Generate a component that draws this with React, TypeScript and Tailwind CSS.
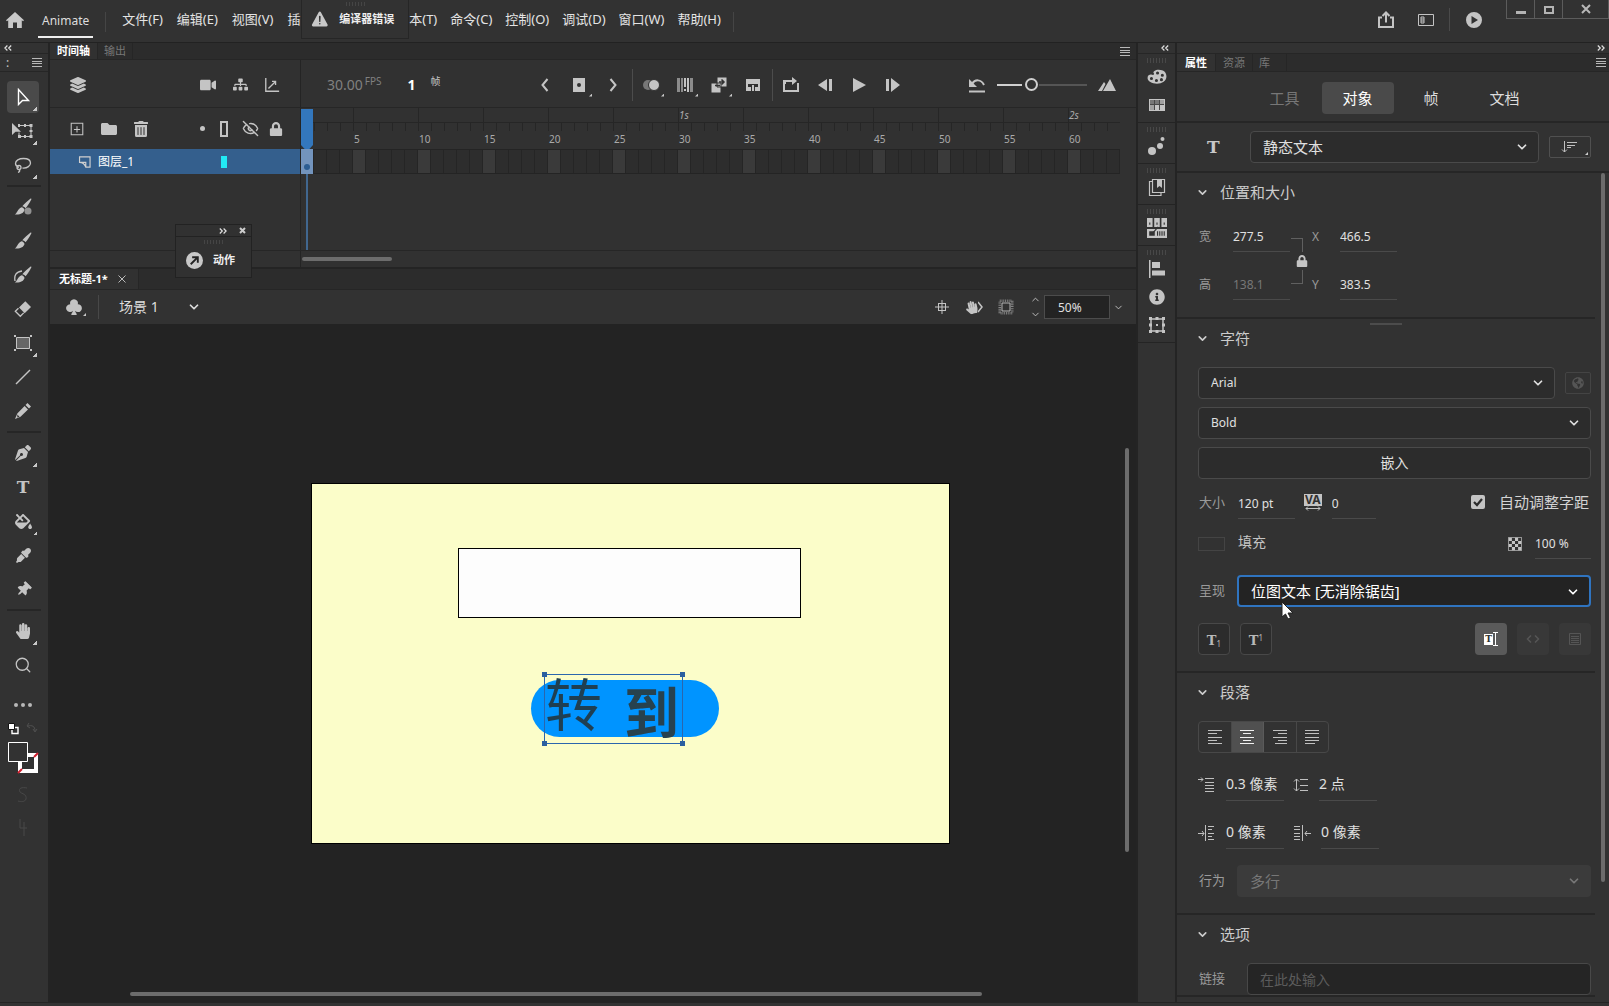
import { useState } from "react";
import type { ReactNode } from "react";
import clsx from "clsx";
import { EyeOff, Search, ChevronDown, ChevronUp } from "lucide-react";
import {
  FaEyeDropper,
  FaFillDrip,
  FaFolder,
  FaGlobeAmericas,
  FaHandPaper,
  FaInfoCircle,
  FaLayerGroup,
  FaLock,
  FaPenNib,
  FaSitemap,
  FaThumbtack,
  FaTrashAlt,
  FaVideo,
} from "react-icons/fa";
import { BsSuitClubFill } from "react-icons/bs";
import { IoWarning } from "react-icons/io5";

const frames = Array.from({ length: 63 }, (_, i) => i + 1);

type IconProps = { children: ReactNode; size?: number; className?: string };

function Icon({ children, size = 18, className }: IconProps) {
  return (
    <svg
      width={size}
      height={size}
      viewBox="0 0 18 18"
      fill="currentColor"
      className={className}
      aria-hidden="true"
    >
      {children}
    </svg>
  );
}

function Corner() {
  return (
    <span className="absolute right-[2px] bottom-[2px] h-1 w-1 bg-linear-to-tl from-[#c8c8c8] from-50% to-transparent to-50%" />
  );
}

function Hamburger() {
  return (
    <svg width="10" height="9" viewBox="0 0 10 9" fill="none" stroke="#b8b8b8" aria-hidden="true">
      <path d="M0 .5h10M0 3.5h10M0 5.5h10M0 8.5h10" />
    </svg>
  );
}

function Chevrons({ right = false }: { right?: boolean }) {
  return (
    <svg width="8" height="6" viewBox="0 0 8 6" fill="none" stroke="#e0e0e0" strokeWidth="1.2" aria-hidden="true">
      <path d={right ? "M.8.5 3.3 3 .8 5.5M4.6.5 7.1 3 4.6 5.5" : "M3.4.5.9 3l2.5 2.5M7.2.5 4.7 3l2.5 2.5"} />
    </svg>
  );
}

function SlabT({ className }: { className?: string }) {
  return <span className={clsx("font-['DejaVu_Serif',serif] leading-none", className)}>T</span>;
}

function Header() {
  const menus = ["文件(F)", "编辑(E)", "视图(V)", "插"];
  const moreMenus = ["本(T)", "命令(C)", "控制(O)", "调试(D)", "窗口(W)", "帮助(H)"];

  return (
    <header className="flex h-[43px] shrink-0 border-b border-[#222] bg-[#323232]">
      <a href="#home" aria-label="主页" className="flex h-10 w-[38px] items-center pl-[6px] text-[#c8c8c8]">
        <Icon>
          <path d="M9 1 18 9.2l-1 1-1.2-1V17H11v-5.5H7V17H2.2V9.2L1 10.2l-1-1z" />
        </Icon>
      </a>
      <a href="#animate" className="h-[38px] border-b-2 border-[#eee] px-1 pt-3 text-xs leading-[18px] text-[#ddd]">
        Animate
      </a>
      <div className="mt-3 ml-3 h-5 border-l border-[#454545]" />
      <nav className="flex w-[195px] gap-[14px] overflow-hidden pt-[9px] pl-4 text-[13px] leading-5 whitespace-nowrap text-[#e4e4e4]">
        {menus.map((m) => (
          <a key={m} href="#menu">{m}</a>
        ))}
      </nav>

      {/* floating compiler error panel */}
      <button className="relative flex h-[39px] w-[108px] items-center border border-t-0 border-[#262626] bg-[#323232] pl-2 text-[11px] font-bold text-[#eee]">
        <span className="absolute top-[2px] left-11 h-1 w-5 bg-[repeating-linear-gradient(90deg,#454545_0_1px,transparent_1px_3px)]" />
        <IoWarning size={20} className="mr-[9px] text-[#c8c8c8]" />
        编译器错误
      </button>

      <nav className="flex gap-[13px] pt-[9px] text-[13px] leading-5 whitespace-nowrap text-[#e4e4e4]">
        {moreMenus.map((m) => (
          <a key={m} href="#menu">{m}</a>
        ))}
      </nav>
      <div className="mt-3 ml-3 h-5 border-l border-[#454545]" />

      <div className="ml-auto flex text-[#c4c4c4]">
        <button aria-label="共享" className="flex h-10 w-10 items-center justify-center">
          <Icon>
            <path d="M5 6.5H2V16h14V6.5h-3M9 11.5V2M5.5 5 9 1.5 12.500 5" fill="none" stroke="currentColor" strokeWidth="2" />
          </Icon>
        </button>
        <button aria-label="工作区" className="flex h-10 w-10 items-center justify-center">
          <Icon>
            <path d="M1.500 3.500h15v11h-15zM4 6h3v6H4zM4 8h3M4 10h3" fill="none" stroke="currentColor" />
          </Icon>
        </button>
        <div className="mt-2 mr-1 ml-[3px] h-[23px] border-l border-[#4a4a4a]" />
        <button aria-label="测试影片" className="flex h-10 w-10 items-center justify-center">
          <Icon>
            <path d="M9 1a8 8 0 1 0 0 16A8 8 0 0 0 9 1zM6.500 5 13 9l-6.500 4z" fillRule="evenodd" />
          </Icon>
        </button>
        <div className="ml-3 flex h-[19px] w-[103px] divide-x divide-[#5c5c5c] border border-t-0 border-[#5c5c5c]">
          <button aria-label="最小化" className="flex w-7 items-end justify-center pb-1">
            <span className="h-[3px] w-[10px] bg-[#b4b4b4]" />
          </button>
          <button aria-label="最大化" className="flex w-7 items-end justify-center pb-1">
            <span className="h-2 w-[10px] border-2 border-[#b4b4b4]" />
          </button>
          <button aria-label="关闭" className="flex flex-1 items-center justify-center">
            <svg width="10" height="10" viewBox="0 0 10 10" stroke="#b8b8b8" strokeWidth="2">
              <path d="m1 1 8 8M9 1 1 9" />
            </svg>
          </button>
        </div>
      </div>
    </header>
  );
}

const handle = <path d="M11.500 10.300C13 8.600 15.700 4.800 17.400 1.200c.2-.6-.3-1-.8-.6C13.500 3 10 6.500 8.300 8.300c1.500.3 2.600 1 3.200 2z" />;
const bristle = <path d="M7.500 9.200c1.500.2 2.800 1.300 3 2.800-.8 3-4 5-9.700 4.500C3 15.500 3.500 11 7.500 9.200z" />;

const toolGroups: { name: string; icon: ReactNode; more?: boolean }[][] = [
  [
    {
      name: "选择工具",
      more: true,
      icon: <Icon><path d="M4.500 1.500v15l4-4h6z" fill="none" stroke="#fff" strokeWidth="1.400" /></Icon>,
    },
    {
      name: "任意变形工具",
      more: true,
      icon: (
        <svg width="22" height="18" viewBox="0 0 22 18" fill="currentColor">
          <path d="M0 1v12l3.500-3.300H9z" />
          <path d="M7 3.500h12v11H7v-4" fill="none" stroke="currentColor" />
          <path d="M12 2h2v3h-2zM17.500 2h3v3h-3zM17.500 8h3v2h-3zM17.500 13h3v3h-3zM12 13h2v3h-2zM6 13h3v3H6zM6 2h2v3H6z" />
        </svg>
      ),
    },
    {
      name: "套索工具",
      more: true,
      icon: (
        <Icon>
          <path
            d="M5 11.500C2.500 10.500 1.500 9 1.500 7.500c0-3 3.500-5 8-5s7 2 7 4.500-3 5.500-8 5M5 9.500a2 2 0 1 0 0 4 2 2 0 0 0 0-4zM5.500 13.500c.5 1.500 0 2.500-1.500 3"
            fill="none"
            stroke="currentColor"
            strokeWidth="1.300"
          />
        </Icon>
      ),
    },
  ],
  [
    { name: "流畅画笔", icon: <Icon>{handle}{bristle}<circle cx="14" cy="13" r="3.500" fill="#929292" /></Icon> },
    { name: "传统画笔", icon: <Icon>{handle}{bristle}</Icon> },
    {
      name: "画笔工具",
      icon: <Icon>{handle}{bristle}<path d="M1 15c-1-6 1-9 7-10" fill="none" stroke="currentColor" strokeWidth="1.300" /></Icon>,
    },
    {
      name: "橡皮擦工具",
      icon: (
        <Icon>
          <path d="M11.300 1.300 17 7l-6.300 6.300L5 7.600z" />
          <path d="M4.500 8.200 1.300 11.300l5 5 3.400-3.400" fill="none" stroke="currentColor" strokeWidth="1.300" />
        </Icon>
      ),
    },
    {
      name: "矩形工具",
      more: true,
      icon: (
        <Icon>
          <path d="M2.500 3.500h13v11h-13z" fill="#666" stroke="currentColor" />
          <path d="M0 1h2v2H0zM16 1h2v2h-2zM0 15h2v2H0zM16 15h2v2h-2z" />
        </Icon>
      ),
    },
    { name: "线条工具", icon: <Icon><path d="M2 16 16 2" stroke="currentColor" strokeWidth="1.500" /></Icon> },
    {
      name: "铅笔工具",
      icon: (
        <Icon>
          <path d="m13.500 1 3.500 3.500-2 2L11.500 3zM10.600 4 14 7.400l-7.500 7.300L1 17l2.300-5.600z" />
          <path d="m3.300 12.500 2.200 2.200-2.200.8z" fill="#323232" />
        </Icon>
      ),
    },
  ],
  [
    { name: "钢笔工具", more: true, icon: <FaPenNib size={16} /> },
    { name: "文本工具", icon: <SlabT className="text-[17px] font-bold" /> },
    { name: "颜料桶工具", more: true, icon: <FaFillDrip size={17} /> },
    { name: "滴管工具", icon: <FaEyeDropper size={15} /> },
    { name: "资源变形工具", icon: <FaThumbtack size={15} className="rotate-45" /> },
  ],
  [
    { name: "手形工具", more: true, icon: <FaHandPaper size={16} /> },
    { name: "缩放工具", icon: <Search size={18} strokeWidth={1.7} /> },
  ],
];

function Toolbar() {
  const [active, setActive] = useState("选择工具");

  return (
    <aside className="flex w-[50px] shrink-0 flex-col border-r-2 border-[#242424] bg-[#323232] text-[#c4c4c4]">
      <div className="flex h-[11px] items-center border-b border-[#262626] pl-1">
        <Chevrons />
      </div>
      <div className="flex h-[18px] items-center justify-between border-b border-[#262626] px-[6px] text-xs">
        <span>:</span>
        <Hamburger />
      </div>
      <div className="flex flex-col pt-2">
        {toolGroups.map((group, i) => (
          <div key={i} className="flex flex-col">
            {i > 0 && (
              <div className="flex h-2 items-center px-[7px]">
                <div className="h-[2px] w-full bg-[#262626]" />
              </div>
            )}
            {group.map((tool) => (
              <button
                key={tool.name}
                aria-label={tool.name}
                onClick={() => setActive(tool.name)}
                className={clsx(
                  "relative mx-[7px] my-px flex h-8 w-8 items-center justify-center rounded",
                  active === tool.name && "bg-[#4a4a4a]"
                )}
              >
                {tool.icon}
                {tool.more && <Corner />}
              </button>
            ))}
          </div>
        ))}
      </div>
      <button aria-label="更多工具" className="flex h-[38px] w-[46px] items-center justify-center gap-[3px] pt-2">
        <span className="size-1 rounded-full bg-[#b8b8b8]" />
        <span className="size-1 rounded-full bg-[#b8b8b8]" />
        <span className="size-1 rounded-full bg-[#b8b8b8]" />
      </button>
      <svg width="46" height="56" viewBox="0 0 46 56" fill="none" aria-label="填充和笔触颜色">
        <path d="M12 7.500h6v6h-6z" stroke="#fff" strokeWidth="1.400" />
        <path d="M8.500 3.500h6v6h-6z" fill="#fff" stroke="#111" />
        <path d="M28 6c4-1 7 0 7 5m-2-2 2 3 2-3M29 3l-2 3 3 2" stroke="#505050" />
        <path d="M20 35h16v16H20z" stroke="#fff" strokeWidth="4" />
        <path d="m18 53 4-4M34 37l4-4" stroke="#d02030" strokeWidth="2" />
        <path d="M8.500 22.500h19v19h-19z" fill="#323232" stroke="#fff" />
      </svg>
      <svg width="46" height="68" viewBox="0 0 46 68" fill="none" stroke="#484848" aria-hidden="true">
        <path d="M27 12c-5-1-9 0-7 4 2 2 7 2 6 7-1 3-5 3-8 2M20 43v9h7M24 46v14" />
      </svg>
    </aside>
  );
}

function CtrlButton({ label, more, children }: { label: string; more?: boolean; children: ReactNode }) {
  return (
    <button aria-label={label} className="relative flex h-8 w-[34px] items-center justify-center">
      {children}
      {more && <span className="absolute right-1 bottom-1 size-[3px] bg-[#c8c8c8] [clip-path:polygon(100%_0,100%_100%,0_100%)]" />}
    </button>
  );
}

function ColDivider() {
  return <div className="flex w-1 justify-center"><div className="h-8 w-px bg-[#4c4c4c]" /></div>;
}

function TimelineControls() {
  return (
    <div className="flex min-w-0 flex-1 items-center border-l border-[#242424] pt-[2px] pr-3 text-[#c4c4c4]">
      <div className="flex w-[227px] pl-[26px] leading-5">
        <span className="text-sm text-[#808080]">30.00</span>
        <span className="-mt-1 ml-[2px] text-[10px] text-[#808080]">FPS</span>
        <span className="ml-[26px] text-sm font-bold text-white">1</span>
        <span className="-mt-1 ml-[15px] text-[10px]">帧</span>
      </div>
      <div className="flex items-center">
        <CtrlButton label="上一关键帧">
          <Icon><path d="m11.500 3-5 6 5 6" fill="none" stroke="currentColor" strokeWidth="2" /></Icon>
        </CtrlButton>
        <CtrlButton label="插入关键帧" more>
          <Icon><path d="M3 2h12v14H3zm6 5a2 2 0 1 0 0 4 2 2 0 0 0 0-4z" fillRule="evenodd" /></Icon>
        </CtrlButton>
        <CtrlButton label="下一关键帧">
          <Icon><path d="m6.500 3 5 6-5 6" fill="none" stroke="currentColor" strokeWidth="2" /></Icon>
        </CtrlButton>
        <ColDivider />
        <CtrlButton label="绘图纸外观" more>
          <Icon><circle cx="6" cy="9" r="5" fill="#777" /><circle cx="12" cy="9" r="5.500" stroke="#323232" /></Icon>
        </CtrlButton>
        <CtrlButton label="编辑多个帧" more>
          <Icon>
            <path d="M1 2h3v14H1zM5 2h2v14H5zM14 2h3v14h-3z" fill="#8c8c8c" />
            <path d="M8 2h2v9H8zM8 13h2v2H8zM11 2h2v14h-2z" />
          </Icon>
        </CtrlButton>
        <CtrlButton label="创建传统补间" more>
          <Icon>
            <path d="M1 7h10v10H1zM7 1h10v10H7z" stroke="#323232" />
            <path d="M5 9.500h5M9 6h5M11.500 3.500 14 6l-2.500 2.500" fill="none" stroke="#323232" strokeWidth="1.500" />
          </Icon>
        </CtrlButton>
        <CtrlButton label="帧视图">
          <Icon><path d="M2 3h14v12h-5v-4h3V8H4v3h3v4H2zM8 9h2v6H8z" /></Icon>
        </CtrlButton>
        <ColDivider />
        <CtrlButton label="循环">
          <Icon>
            <path d="M4 7H2v8h14V7M2 7V5h9" fill="none" stroke="currentColor" strokeWidth="2" />
            <path d="M10 1v8l5-4z" />
          </Icon>
        </CtrlButton>
        <CtrlButton label="后退一帧"><Icon><path d="M11 3v12L2 9zM13 3h3v12h-3z" /></Icon></CtrlButton>
        <CtrlButton label="播放"><Icon><path d="M3 2v14l13-7z" /></Icon></CtrlButton>
        <CtrlButton label="前进一帧"><Icon><path d="M7 2v14l9-7zM2 3h3v12H2z" /></Icon></CtrlButton>
      </div>
      <div className="ml-auto flex items-center">
        <CtrlButton label="重置时间轴缩放">
          <Icon>
            <path d="M4 8c3-5 9-5 12 1M1 15.500h16" fill="none" stroke="currentColor" strokeWidth="2" />
            <path d="M1 3v8h8z" />
          </Icon>
        </CtrlButton>
        <input
          type="range"
          aria-label="时间轴缩放"
          defaultValue={36}
          className="mx-[3px] h-4 w-[90px] appearance-none bg-[linear-gradient(90deg,#d0d0d0_28%,transparent_28%_47%,#555_47%)] bg-[length:100%_2px] bg-center bg-no-repeat [&::-webkit-slider-thumb]:size-[13px] [&::-webkit-slider-thumb]:appearance-none [&::-webkit-slider-thumb]:rounded-full [&::-webkit-slider-thumb]:border-2 [&::-webkit-slider-thumb]:border-[#d0d0d0]"
        />
        <CtrlButton label="放大帧"><Icon><path d="m5 15 7-12 6 12zM0 15 6 6l1.500 2L4 15z" /></Icon></CtrlButton>
      </div>
    </div>
  );
}

function Timeline() {
  return (
    <section className="relative shrink-0 border-b-2 border-[#242424] bg-[#313131]">
      <div className="flex h-[17px] border-b border-[#262626] bg-[#2c2c2c] text-[11px] leading-4">
        <button className="bg-[#313131] px-[7px] font-bold text-white">时间轴</button>
        <button className="border-x border-[#262626] px-[6px] text-[#777]">输出</button>
        <button aria-label="面板菜单" className="mr-[6px] ml-auto"><Hamburger /></button>
      </div>
      <div className="flex h-12 border-b border-[#262626]">
        <div className="flex w-[250px] shrink-0 items-center pt-[2px] pr-3 pl-5 text-[#c4c4c4]">
          <button aria-label="图层视图" className="mr-auto"><FaLayerGroup size={16} /></button>
          <button aria-label="添加摄像头" className="flex w-8 justify-center"><FaVideo size={16} /></button>
          <button aria-label="父级视图" className="flex w-8 justify-center"><FaSitemap size={15} /></button>
          <button aria-label="图层深度" className="flex w-8 justify-center">
            <Icon size={16}>
              <path d="M2 1v15h15M5 13l8-8M9 5h4v4" fill="none" stroke="currentColor" strokeWidth="1.500" />
            </Icon>
          </button>
        </div>
        <TimelineControls />
      </div>
      <div className="flex h-[41px]">
        <div className="flex w-[250px] shrink-0 items-center pr-[14px] pl-[11px] text-[#c4c4c4]">
          <button aria-label="新建图层" className="flex w-8 justify-center">
            <Icon size={16}><path d="M2.500 2.500h13v13h-13zM9 6v7M5.500 9.500h7" fill="none" stroke="currentColor" strokeWidth="1.200" /></Icon>
          </button>
          <button aria-label="新建文件夹" className="flex w-8 justify-center"><FaFolder size={16} /></button>
          <button aria-label="删除" className="flex w-8 justify-center"><FaTrashAlt size={16} /></button>
          <span className="ml-auto flex w-6 justify-center"><span className="size-[5px] rounded-full bg-[#c4c4c4]" /></span>
          <button aria-label="轮廓" className="flex w-5 justify-center"><span className="h-4 w-2 border-2 border-[#c4c4c4]" /></button>
          <button aria-label="隐藏" className="flex w-8 justify-center"><EyeOff size={17} /></button>
          <button aria-label="锁定" className="flex w-5 justify-center"><FaLock size={14} /></button>
        </div>
        <div className="flex min-w-0 flex-1 overflow-hidden border-l border-[#242424]">
          {frames.map((f) => (
            <div key={f} className="w-[13px] shrink-0 whitespace-nowrap">
              <div className={clsx("h-[15px] border-b border-[#262626] text-[10px] leading-[14px] text-[#aaa] italic", f % 5 === 0 && "border-l")}>
                {f % 30 === 0 && `${f / 30}s`}
              </div>
              <div className="h-2 border-l border-[#262626]" />
              <div className="h-[18px] pl-px text-[10px] leading-4 text-[#aaa]">{f % 5 === 0 && f}</div>
            </div>
          ))}
        </div>
      </div>
      <div className="flex h-[25px]">
        <div className="flex w-[250px] shrink-0 items-center bg-[#345f8d] pl-7 text-xs text-white">
          <Icon size={14} className="text-[#d0d0d0]">
            <path d="M2 2.500h13.500v13H10c-2-5-4-6-8-6zM10 15V9.500H3" fill="none" stroke="currentColor" strokeWidth="1.500" />
          </Icon>
          <span className="ml-[6px]">图层_1</span>
          <span className="mr-[73px] ml-auto h-3 w-[6px] bg-[#22e9f5]" />
        </div>
        <div className="mr-4 flex min-w-0 flex-1 overflow-hidden border-y border-l border-[#242424] bg-[#2d2d2d]">
          {frames.map((f) => (
            <div key={f} className={clsx("w-[13px] shrink-0 border-r border-[#252525]", f % 5 === 0 && "bg-[#3a3a3a]")} />
          ))}
        </div>
      </div>
      <div className="flex h-[76px]">
        <div className="w-[250px]" />
        <div className="flex-1 border-l border-[#242424]" />
      </div>
      <div className="flex h-[17px] border-t border-[#262626]">
        <div className="w-[250px]" />
        <div className="flex-1 border-l border-[#242424] pt-[6px] pl-px">
          <div className="h-1 w-[90px] rounded-full bg-[#6c6c6c]" />
        </div>
      </div>

      {/* playhead */}
      <div className="absolute top-[66px] left-[251px] flex w-3 flex-col items-center">
        <div className="h-[40px] w-full bg-[#3377bd] [clip-path:polygon(0_0,100%_0,100%_90%,70%_100%,30%_100%,0_90%)]" />
        <div className="flex h-[25px] w-full items-end justify-center bg-[#7394bd] pb-1">
          <div className="size-[6px] rounded-full bg-[#2c5d92]" />
        </div>
        <div className="h-[76px] w-[2px] bg-[#41678f]" />
      </div>

      {/* collapsed actions panel */}
      <div className="absolute top-[181px] left-[125px] z-10 h-[54px] w-[77px] border border-[#222] bg-[#313131]">
        <div className="flex h-3 items-center justify-end gap-3 border-b border-[#222] pr-[5px]">
          <Chevrons right />
          <button aria-label="关闭动作面板">
            <svg width="7" height="7" viewBox="0 0 7 7" stroke="#ccc" strokeWidth="2"><path d="m1 1 5 5M6 1 1 6" /></svg>
          </button>
        </div>
        <div className="mx-auto mt-[3px] h-1 w-5 bg-[repeating-linear-gradient(90deg,#454545_0_1px,transparent_1px_3px)]" />
        <button className="mt-2 flex items-center gap-[10px] pl-[10px] text-[11px] font-bold text-[#eee]">
          <Icon size={17} className="text-[#c8c8c8]">
            <circle cx="9" cy="9" r="9" />
            <path d="m5 13 7-7M6.500 5.500h6v6" fill="none" stroke="#222" strokeWidth="2" />
          </Icon>
          动作
        </button>
      </div>
    </section>
  );
}

function DocumentBar() {
  return (
    <div className="shrink-0">
      <div className="flex h-[21px] border-b border-[#262626] bg-[#2c2c2c]">
        <div className="flex items-center gap-[10px] border-r border-[#262626] bg-[#313131] pr-3 pl-[9px] text-[11px] font-bold text-white">
          无标题-1*
          <button aria-label="关闭文档">
            <svg width="8" height="8" viewBox="0 0 8 8" stroke="#bbb"><path d="m.5.5 7 7M7.500.5l-7 7" /></svg>
          </button>
        </div>
      </div>
      <div className="flex h-[34px] items-center bg-[#323232] text-[#c4c4c4]">
        <button aria-label="编辑元件" className="relative flex w-12 justify-center">
          <BsSuitClubFill size={18} />
          <span className="absolute right-3 bottom-0 size-[3px] bg-[#c8c8c8] [clip-path:polygon(100%_0,100%_100%,0_100%)]" />
        </button>
        <div className="h-6 border-l border-[#484848]" />
        <button className="flex items-center gap-7 pl-5 text-sm text-[#ddd]">
          场景 1
          <ChevronDown size={14} strokeWidth={3} />
        </button>
        <div className="ml-auto flex items-center pr-3">
          <button aria-label="舞台居中" className="flex w-8 justify-center">
            <Icon size={14}><path d="M4.500 4.500h9v9h-9zM9 0v18M0 9h18" fill="none" stroke="currentColor" strokeWidth="1.300" /></Icon>
          </button>
          <button aria-label="旋转工具" className="flex w-8 items-center justify-center">
            <FaHandPaper size={13} className="-rotate-12" />
            <svg width="5" height="12" viewBox="0 0 5 12" fill="none" stroke="currentColor" strokeWidth="1.500"><path d="m0 1 4 5-4 5" /></svg>
          </button>
          <button aria-label="剪切舞台外内容" className="flex w-8 justify-center">
            <Icon size={16}>
              <path d="M2 2h14v14H2z" fill="none" stroke="#858585" strokeWidth="3" strokeDasharray="1 1" />
              <path d="M4.500 4.500h9v9h-9z" fill="none" stroke="currentColor" />
            </Icon>
          </button>
          <div className="mr-[3px] ml-2 flex flex-col gap-1">
            <button aria-label="放大"><ChevronUp size={11} /></button>
            <button aria-label="缩小"><ChevronDown size={11} /></button>
          </div>
          <input aria-label="缩放比例" defaultValue="50%" className="h-6 w-[66px] border border-[#4c4c4c] bg-[#232323] pl-[13px] text-xs text-[#e0e0e0]" />
          <button aria-label="缩放选项" className="pl-[3px]"><ChevronDown size={11} /></button>
        </div>
      </div>
    </div>
  );
}

function Stage() {
  return (
    <main className="relative flex min-h-0 flex-1 items-start justify-center bg-[#232323] pt-[159px]">
      <div className="relative ml-[75px] h-[361px] w-[639px] border border-black bg-[#fbfdc9]">
        <div className="absolute top-16 left-[146px] h-[70px] w-[343px] border border-black bg-[#fdfdfd]" />
        <div className="absolute top-[196px] left-[219px] h-[57px] w-[188px] rounded-full bg-[#0094ff]" />
        <div className="absolute top-[190px] left-[232px] h-[70px] w-[139px] border border-[#2a66ad]">
          <span className="absolute top-0 left-0 font-['Noto_Sans_CJK_SC',sans-serif] text-[57px] leading-[52px] text-[#1f3f52]">转</span>
          <span className="absolute top-2 left-[79px] font-['Noto_Sans_CJK_SC',sans-serif] text-[55px] leading-[52px] font-bold text-[#27424f]">到</span>
          <span className="absolute -top-[3px] -left-[3px] size-[5px] bg-[#2a5f9f]" />
          <span className="absolute -top-[3px] -right-[3px] size-[5px] bg-[#2a5f9f]" />
          <span className="absolute -bottom-[3px] -left-[3px] size-[5px] bg-[#2a5f9f]" />
          <span className="absolute -right-[3px] -bottom-[3px] size-[5px] bg-[#2a5f9f]" />
        </div>
      </div>
      <div className="absolute top-[124px] right-[7px] h-[404px] w-1 rounded-full bg-[#6c6c6c]" />
      <div className="absolute right-[154px] bottom-[6px] left-20 h-1 rounded-full bg-[#6c6c6c]" />
    </main>
  );
}

const dock: { name: string; icon: ReactNode }[][] = [
  [
    {
      name: "颜色",
      icon: (
        <Icon size={20}>
          <path
            fillRule="evenodd"
            d="M10.500 2.500C15 2.500 17.500 5 17.500 8.500c0 4-4 6.500-8.500 6.500S.5 13 .5 10 3 6.500 4.500 7 7 6.500 6 5.500 7.500 2.500 10.500 2.500zM9.500 4a1.400 1.400 0 1 0 0 2.800 1.400 1.400 0 0 0 0-2.800zM13.800 6a1.400 1.400 0 1 0 0 2.800 1.400 1.400 0 0 0 0-2.800zM13 10a1.400 1.400 0 1 0 0 2.800 1.400 1.400 0 0 0 0-2.800zM8.500 10.800a1.400 1.400 0 1 0 0 2.800 1.400 1.400 0 0 0 0-2.800zM4 9a1.400 1.400 0 1 0 0 2.800A1.400 1.400 0 0 0 4 9z"
          />
        </Icon>
      ),
    },
    {
      name: "样本",
      icon: (
        <Icon>
          <path d="M1 3h16v12H1z" />
          <path d="M2 4h4v4H2zM7 4h4v4H7z" fill="#777" />
          <path d="M2 9h4v5H2zM12 4h4v4h-4z" fill="#a0a0a0" />
          <path d="M6.500 4v10M11.500 4v10M2 8.500h14" stroke="#484848" />
        </Icon>
      ),
    },
  ],
  [{ name: "画笔库", icon: <Icon><circle cx="4" cy="14" r="4" /><circle cx="12" cy="9" r="3" /><circle cx="14.500" cy="2" r="2" /></Icon> }],
  [
    {
      name: "库",
      icon: (
        <Icon>
          <path d="M4.500 1.500h12v13h-12zM4 3.500H1.500v14H13V15" fill="none" stroke="currentColor" strokeWidth="1.200" />
          <path d="M9 2h5v8l-2.500-2L9 10z" />
        </Icon>
      ),
    },
  ],
  [
    {
      name: "组件",
      icon: (
        <Icon size={20}>
          <path d="M0 0h5v8H0zM6.500 0h5v8h-5zM13 0h5v8h-5zM0 10h18v8H0z" />
          <path d="M2 4h1v2H2zM8.500 4h1v2h-1zM15 4h1v2h-1zM2 12h5v4H2zM9 12h1v4H9zM11 12h1v4h-1zM13 12h1v4h-1zM15 12h1v4h-1z" fill="#323232" />
          <path d="m4 15 6-7" stroke="#323232" />
        </Icon>
      ),
    },
  ],
  [
    { name: "对齐", icon: <Icon><path d="M1 0h1.500v18H1zM4 2h8v6H4zM4 10.500h13v5H4z" /></Icon> },
    { name: "信息", icon: <FaInfoCircle size={16} /> },
    {
      name: "变形",
      icon: (
        <Icon>
          <path d="M3 3h12v12H3z" fill="none" stroke="currentColor" strokeWidth="1.500" />
          <path d="M1 1h3v3H1zM7.500 1h3v3h-3zM14 1h3v3h-3zM1 7.500h3v3H1zM14 7.500h3v3h-3zM1 14h3v3H1zM7.500 14h3v3h-3zM14 14h3v3h-3zM8 8h2v2H8z" />
        </Icon>
      ),
    },
  ],
];

function Dock() {
  return (
    <aside className="flex w-[41px] shrink-0 flex-col border-x-2 border-[#242424] bg-[#323232] text-[#c4c4c4]">
      <div className="flex h-[11px] items-center justify-end border-b border-[#262626] pr-[6px]"><Chevrons /></div>
      {dock.map((group, i) => (
        <div key={i} className="flex flex-col items-center border-b border-[#242424] pt-1 pb-[3px]">
          <div className="h-[5px] w-5 bg-[repeating-linear-gradient(90deg,#484848_0_1px,transparent_1px_3px)]" />
          {group.map((item) => (
            <button key={item.name} aria-label={item.name} className="flex h-7 w-8 items-center justify-center">
              {item.icon}
            </button>
          ))}
        </div>
      ))}
    </aside>
  );
}

type SelectProps = { id: string; label?: string; value: string; className?: string; disabled?: boolean };

function Select({ id, label, value, className, disabled }: SelectProps) {
  return (
    <div className={clsx("relative h-8 min-w-0 flex-1 rounded border", className)}>
      <select id={id} aria-label={label} disabled={disabled} className="h-full w-full appearance-none bg-transparent px-3 outline-none">
        <option>{value}</option>
      </select>
      <ChevronDown size={14} strokeWidth={3} className="pointer-events-none absolute top-2 right-[9px]" />
    </div>
  );
}

const fieldBox = "border-[#4a4a4a] bg-[#2c2c2c] text-[#e0e0e0]";

type FieldProps = { id: string; label?: string; value: string; className?: string; dim?: boolean };

function Field({ id, label, value, className, dim }: FieldProps) {
  return (
    <input
      id={id}
      aria-label={label}
      defaultValue={value}
      className={clsx("h-[31px] border-b border-[#4a4a4a] bg-transparent outline-none", dim ? "text-[#777]" : "text-[#e0e0e0]", className)}
    />
  );
}

function Section({ title, children, className }: { title: string; children?: ReactNode; className?: string }) {
  return (
    <section className={clsx("mr-[14px] border-b-2 border-[#262626] pr-1 pl-[21px]", className)}>
      <h2 className="flex h-10 items-center gap-[11px] pb-[2px] text-[15px] text-[#ccc]">
        <ChevronDown size={13} strokeWidth={3} className="-ml-[2px]" />
        {title}
      </h2>
      {children}
    </section>
  );
}

function ParaIcon({ d }: { d: string }) {
  return (
    <svg width="18" height="16" viewBox="0 0 18 16" fill="none" stroke="#c0c0c0" aria-hidden="true">
      <path d={d} />
    </svg>
  );
}

function Properties() {
  const [align, setAlign] = useState(1);
  const aligns = [
    { name: "左对齐", d: "M2 1.500h14M2 4.500h9M2 8.500h14M2 11.500h9M2 14.500h14" },
    { name: "居中对齐", d: "M2 1.500h14M5 4.500h8M2 8.500h14M5 11.500h8M2 14.500h14" },
    { name: "右对齐", d: "M2 1.500h14M7 4.500h9M2 8.500h14M7 11.500h9M4 14.500h12" },
    { name: "两端对齐", d: "M2 1.500h14M2 4.500h14M2 8.500h14M2 11.500h14M2 14.500h10" },
  ];
  const label = "text-[#9a9a9a]";

  return (
    <aside className="flex w-[432px] shrink-0 flex-col bg-[#323232]">
      <div className="flex h-[11px] items-center justify-end border-b border-[#262626] pr-1"><Chevrons right /></div>
      <div className="flex h-[18px] border-b border-[#262626] bg-[#2c2c2c] text-[11px] leading-[17px]">
        <button className="bg-[#323232] px-2 font-bold text-white">属性</button>
        <button className="border-x border-[#262626] px-[7px] text-[#777]">资源</button>
        <button className="border-r border-[#262626] pr-4 pl-[6px] text-[#777]">库</button>
        <button aria-label="面板菜单" className="mr-[3px] ml-auto"><Hamburger /></button>
      </div>
      <div className="flex h-[51px] items-center justify-center gap-1 border-b-2 border-[#262626] pt-[3px] pl-[6px] text-[15px] text-[#ddd]">
        <button className="h-8 w-[66px] text-[#777]">工具</button>
        <button className="h-8 w-[72px] rounded bg-[#4a4a4a] text-white">对象</button>
        <button className="h-8 w-[67px]">帧</button>
        <button className="h-8 w-[72px]">文档</button>
      </div>
      <div className="flex h-[50px] items-center border-b-2 border-[#262626] pr-[18px] pl-[30px]">
        <SlabT className="w-[43px] text-[17px] font-bold text-[#c8c8c8]" />
        <Select id="text-type" label="文本类型" value="静态文本" className={clsx(fieldBox, "text-[15px]")} />
        <button aria-label="改变文本方向" className="relative ml-[10px] flex h-[22px] w-[42px] items-center justify-center rounded-xs border border-[#505050]">
          <ParaIcon d="M3.500 2v11M1 10.500l2.500 2.500L6 10.500M6 3.500h10M6 6.500h8M6 8.500h4" />
          <span className="absolute right-[2px] bottom-[2px] size-[3px] bg-[#ccc] [clip-path:polygon(100%_0,100%_100%,0_100%)]" />
        </button>
      </div>

      <div className="relative min-h-0 flex-1 overflow-hidden">
        <Section title="位置和大小">
          <div className="flex h-[104px] text-xs">
            <div className="flex flex-col gap-[17px] pt-2">
              <div className="flex items-center">
                <label htmlFor="width" className={clsx(label, "w-[35px] pl-px")}>宽</label>
                <Field id="width" value="277.5" className="w-[57px]" />
              </div>
              <div className="flex items-center">
                <label htmlFor="height" className={clsx(label, "w-[35px] pl-px")}>高</label>
                <Field id="height" value="138.1" className="w-[57px]" dim />
              </div>
            </div>
            <button aria-label="锁定宽高比" className="flex h-full w-[22px] flex-col items-center pt-[25px] pl-px text-[#c4c4c4]">
              <span className="h-[14px] w-3 self-start border-t border-r border-[#606060]" />
              <FaLock size={12} className="my-[3px]" />
              <span className="h-[14px] w-3 self-start border-r border-b border-[#606060]" />
            </button>
            <div className="flex flex-col gap-[17px] pt-2">
              <div className="flex items-center">
                <label htmlFor="pos-x" className={clsx(label, "w-7")}>X</label>
                <Field id="pos-x" value="466.5" className="w-[57px]" />
              </div>
              <div className="flex items-center">
                <label htmlFor="pos-y" className={clsx(label, "w-7")}>Y</label>
                <Field id="pos-y" value="383.5" className="w-[57px]" />
              </div>
            </div>
          </div>
        </Section>

        <Section title="字符" className="relative">
          <span className="absolute top-1 left-[193px] h-[2px] w-8 bg-[#4c4c4c]" />
          <div className="flex flex-col gap-2 pt-2 text-xs">
            <div className="flex items-center gap-[10px]">
              <Select id="font-family" label="字体" value="Arial" className={fieldBox} />
              <button aria-label="下载字体" className="flex h-[22px] w-[26px] items-center justify-center rounded-xs border border-[#444] text-[#555]">
                <FaGlobeAmericas size={12} />
              </button>
            </div>
            <div className="flex">
              <Select id="font-style" label="字体样式" value="Bold" className={fieldBox} />
            </div>
            <button className="h-8 rounded border border-[#4a4a4a] bg-[#2c2c2c] text-sm text-[#e0e0e0]">嵌入</button>
          </div>
          <div className="flex h-10 items-end text-xs">
            <label htmlFor="font-size" className={clsx(label, "w-10 self-center pt-2 pl-px text-[13px]")}>大小</label>
            <Field id="font-size" value="120 pt" className="w-[57px]" />
            <label htmlFor="tracking" className="mr-[10px] ml-[9px] flex flex-col items-center self-center pt-[7px]">
              <span className="bg-[#c4c4c4] px-px text-xs leading-3 font-bold text-[#323232]">VA</span>
              <svg width="16" height="5" viewBox="0 0 16 5" fill="none" stroke="#c4c4c4"><path d="M1 2.500h14M3 .5l-2 2 2 2M13 .5l2 2-2 2" /></svg>
            </label>
            <Field id="tracking" label="字距" value="0" className="w-11" />
            <label className="mr-[2px] ml-auto flex items-center gap-[14px] self-center pt-[6px] text-[15px] text-[#d4d4d4]">
              <span className="relative flex size-[14px]">
                <input type="checkbox" defaultChecked className="peer size-[14px] appearance-none rounded-xs border-2 border-[#c4c4c4] checked:bg-[#c4c4c4]" />
                <svg viewBox="0 0 14 14" fill="none" stroke="#2c2c2c" strokeWidth="2.200" className="pointer-events-none absolute inset-0 opacity-0 peer-checked:opacity-100">
                  <path d="m3 7 3 3 5-6" />
                </svg>
              </span>
              自动调整字距
            </label>
          </div>
          <div className="flex h-10 items-end text-xs">
            <button id="fill" className="mb-2 h-[14px] w-[27px] border border-[#444]" />
            <label htmlFor="fill" className="ml-[13px] self-center pt-[6px] text-sm text-[#c4c4c4]">填充</label>
            <Icon size={14} className="mr-[13px] mb-2 ml-auto text-[#c4c4c4]">
              <path d="M.5.5h17v17H.5z" fill="none" stroke="currentColor" />
              <path d="M1 1h4v4H1zM9 1h4v4H9zM5 5h4v4H5zM13 5h4v4h-4zM1 9h4v4H1zM9 9h4v4H9zM5 13h4v4H5zM13 13h4v4h-4z" />
            </Icon>
            <Field id="opacity" label="不透明度" value="100 %" className="w-[56px]" />
          </div>
          <div className="mt-4 flex h-8 items-center">
            <label htmlFor="render" className={clsx(label, "w-[39px] pl-px text-[13px]")}>呈现</label>
            <Select id="render" value="位图文本 [无消除锯齿]" className="border-2 !border-[#2f74c0] bg-[#232323] text-[15px] text-white" />
          </div>
          <div className="flex items-center gap-[10px] pt-4 pb-4 text-[#b8b8b8]">
            <button aria-label="下标" className="h-8 w-8 rounded border border-[#484848] bg-[#2c2c2c]">
              <SlabT className="text-[13px] font-bold" /><sub className="text-[8px]">1</sub>
            </button>
            <button aria-label="上标" className="mr-auto h-8 w-8 rounded border border-[#484848] bg-[#2c2c2c]">
              <SlabT className="text-[13px] font-bold" /><sup className="text-[8px]">1</sup>
            </button>
            <button aria-label="可选" className="flex h-8 w-8 items-center justify-center rounded bg-[#5a5a5a] text-white">
              <span className="bg-white px-px font-['DejaVu_Serif',serif] text-[9px] leading-[11px] font-bold text-[#333]">T</span>
              <svg width="5" height="14" viewBox="0 0 5 14" fill="none" stroke="#fff"><path d="M0 .5h5M2.500 1v12M0 13.500h5" /></svg>
            </button>
            <button aria-label="将文本呈现为HTML" disabled className="flex h-8 w-8 items-center justify-center rounded bg-[#383838]">
              <svg width="14" height="8" viewBox="0 0 14 8" fill="none" stroke="#555" strokeWidth="1.500"><path d="M5 .5 1.500 4 5 7.500M9 .5 12.500 4 9 7.500" /></svg>
            </button>
            <button aria-label="在文本周围显示边框" disabled className="flex h-8 w-8 items-center justify-center rounded bg-[#383838]">
              <svg width="12" height="12" viewBox="0 0 12 12" fill="none" stroke="#555"><path d="M.5.5h11v11H.5zM2 3.500h8M2 5.500h8M2 7.500h8M2 9.500h8" /></svg>
            </button>
          </div>
        </Section>

        <Section title="段落">
          <div className="mt-2 flex h-8 w-[131px] divide-x divide-[#484848] overflow-hidden rounded border border-[#484848]">
            {aligns.map((a, i) => (
              <button
                key={a.name}
                aria-label={a.name}
                onClick={() => setAlign(i)}
                className={clsx("flex flex-1 items-center justify-center", align === i && "bg-[#404040] brightness-125")}
              >
                <ParaIcon d={a.d} />
              </button>
            ))}
          </div>
          <div className="mt-4 flex h-8 items-center text-sm">
            <ParaIcon d="M0 2.500h5M3 .5l2 2-2 2M7 1.500h9M7 5.500h9M7 8.500h9M7 11.500h9M7 14.500h9" />
            <Field id="indent" label="缩进" value="0.3 像素" className="ml-[10px] w-[58px] pb-[3px]" />
            <span className="ml-[9px]"><ParaIcon d="M3.500 2v12M1 4.500 3.500 2 6 4.500M1 11.500 3.500 14 6 11.500M7 2.500h8M7 8.500h8M7 13.500h8" /></span>
            <Field id="leading" label="行距" value="2 点" className="ml-2 w-[58px] pb-[3px]" />
          </div>
          <div className="mt-4 flex h-8 items-center text-sm">
            <ParaIcon d="M0 8.500h6M4 6l2 2.500L4 11M7.500 0v16M10 1.500h6M10 4.500h4M10 8.500h6M10 11.500h4M10 14.500h6" />
            <Field id="margin-left" label="左边距" value="0 像素" className="ml-[10px] w-[58px] pb-[3px]" />
            <span className="ml-[9px]"><ParaIcon d="M18 8.500h-6M14 6l-2 2.500 2 2.500M9.500 0v16M1 1.500h6M1 4.500h6M1 8.500h6M1 11.500h6M1 14.500h6" /></span>
            <Field id="margin-right" label="右边距" value="0 像素" className="ml-[10px] w-[58px] pb-[3px]" />
          </div>
          <div className="mt-4 mb-4 flex h-8 items-center">
            <label htmlFor="behavior" className={clsx(label, "w-[39px] pl-px text-[13px]")}>行为</label>
            <Select id="behavior" value="多行" disabled className="border-transparent bg-[#3b3b3b] text-[15px] text-[#777]" />
          </div>
        </Section>

        <Section title="选项" className="border-b-0">
          <div className="mt-2 flex h-8 items-center">
            <label htmlFor="link" className={clsx(label, "w-[49px] pl-px text-[13px]")}>链接</label>
            <input id="link" placeholder="在此处输入" className="h-8 min-w-0 flex-1 rounded border border-[#484848] bg-[#252525] px-3 text-sm placeholder:text-[#5c5c5c]" />
          </div>
        </Section>

        <div className="absolute top-0 right-1 h-[709px] w-1 rounded-full bg-[#6c6c6c]" />
      </div>
    </aside>
  );
}

export default function App() {
  return (
    <div className="relative flex h-screen flex-col overflow-hidden bg-[#323232] font-['Noto_Sans','Noto_Sans_CJK_SC',sans-serif]">
      <Header />
      <div className="flex min-h-0 flex-1">
        <Toolbar />
        <div className="flex min-w-0 flex-1 flex-col">
          <Timeline />
          <DocumentBar />
          <Stage />
        </div>
        <Dock />
        <Properties />
      </div>
      <footer className="h-1 shrink-0 border-t border-[#242424] bg-[#323232]" />
      <svg width="13" height="19" viewBox="0 0 13 19" className="pointer-events-none absolute top-[601px] right-[315px]" aria-hidden="true">
        <path d="M1 1v15l3.500-3 2.500 5 2.500-1.200L7 12h5z" fill="#fff" stroke="#222" />
      </svg>
    </div>
  );
}
